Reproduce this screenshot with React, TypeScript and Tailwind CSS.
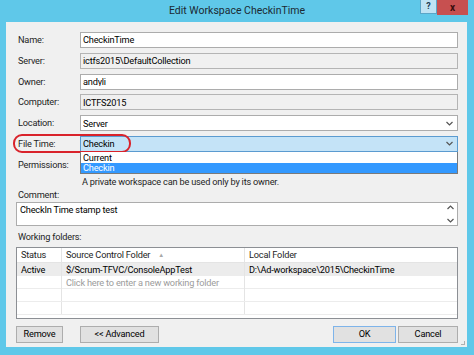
import React from "react";

function Chevron({ up = false }: { up?: boolean }) {
  return (
    <svg width="7" height="5" viewBox="0 0 7 5" className={up ? "rotate-180" : ""}>
      <path d="M0.5 1 L3.5 4 L6.5 1" fill="none" stroke="#555" strokeWidth="1.2" />
    </svg>
  );
}

function Field({
  label,
  value,
  readOnly = false,
  select = false,
  active = false,
}: {
  label: string;
  value?: string;
  readOnly?: boolean;
  select?: boolean;
  active?: boolean;
}) {
  const box = active
    ? "bg-[#c4e3f7] border-[#5b9bd0]"
    : readOnly
    ? "bg-[#f0f0f0] border-[#b4b4b4]"
    : "bg-white border-[#acacac]";
  return (
    <div className="flex items-center h-[16px]">
      <div className="w-[64px] pl-[2px] text-[#1e1e1e]">{label}</div>
      <div className={`flex-1 h-full border ${box} flex items-center pl-[2px] pr-[4px]`}>
        <span className="flex-1 truncate leading-none text-black">{value}</span>
        {select && <Chevron />}
      </div>
    </div>
  );
}

export default function App() {
  const rows = [
    { status: "Active", src: "$/Scrum-TFVC/ConsoleAppTest", local: "D:\\Ad-workspace\\2015\\CheckinTime", bg: "bg-[#ececec]" },
    { status: "", src: "Click here to enter a new working folder", local: "", bg: "bg-white", hint: true },
    { status: "", src: "", local: "", bg: "bg-white" },
    { status: "", src: "", local: "", bg: "bg-white" },
  ];

  return (
    <div className="w-[474px] h-[355px] bg-[#5fc8e9] flex flex-col font-['Roboto',sans-serif] text-[9.2px] tracking-[-0.2px] overflow-hidden">
      {/* title bar */}
      <div className="relative h-[22px] flex items-center justify-center">
        <span className="text-[10.5px] tracking-normal text-[#1b2a33]">Edit Workspace CheckinTime</span>
        <div className="absolute right-[6px] top-0 flex">
          <div className="w-[17px] h-[14px] bg-[#bfe3f4] border border-[#5aa6c8] border-t-0 flex items-center justify-center text-[9px] font-bold text-[#1d3b52] leading-none">
            ?
          </div>
          <div className="w-[31px] h-[15px] bg-[#c75050] flex items-center justify-center text-[10px] font-bold text-[#3a0d0d] leading-none">
            x
          </div>
        </div>
      </div>

      {/* client area */}
      <div className="relative flex-1 ml-[6px] mr-[7px] mb-[8px] bg-[#f0f0f0] pl-[10px] pr-[9px] pt-[10px] flex flex-col">
        <div className="flex flex-col gap-[4.8px]">
          <Field label="Name:" value="CheckinTime" />
          <Field label="Server:" value="ictfs2015\DefaultCollection" readOnly />
          <Field label="Owner:" value="andyli" />
          <Field label="Computer:" value="ICTFS2015" readOnly />
          <Field label="Location:" value="Server" select />
          <div className="relative">
            <Field label="File Time:" value="Checkin" select active />
            <div className="absolute left-[-3px] top-[-2px] w-[118px] h-[19px] rounded-[9px] border-2 border-[#d9232b]" />
          </div>
          <Field label="Permissions:" value="" select />
        </div>

        {/* dropdown list */}
        <div className="absolute left-[74px] top-[130px] w-[378px] h-[22px] bg-white border border-[#7a7a7a] border-t-0 flex flex-col leading-none">
          <div className="h-[11px] pl-[2px] flex items-center text-black">Current</div>
          <div className="h-[10px] pl-[2px] flex items-center bg-[#3399ff] text-white">Checkin</div>
        </div>

        <div className="mt-[3px] ml-[66px] h-[12px] flex items-center text-[#1e1e1e]">
          A private workspace can be used only by its owner.
        </div>
        <div className="mt-[1px] ml-[2px] h-[12px] flex items-center text-[#1e1e1e]">Comment:</div>
        <div className="mt-[1px] h-[24px] bg-white border border-[#acacac] flex">
          <div className="flex-1 pl-[3px] pt-[1px] text-black leading-[12px]">CheckIn Time stamp test</div>
          <div className="w-[11px] flex flex-col items-center justify-between py-[2px] mr-[1px]">
            <Chevron up />
            <Chevron />
          </div>
        </div>

        <div className="mt-[5px] ml-[2px] h-[12px] flex items-center text-[#1e1e1e]">Working folders:</div>
        <div className="mt-[4px] h-[72px] bg-white border border-[#8c8f94] flex flex-col">
          <div className="grid grid-cols-[44px_183px_1fr] h-[15px] border-b border-[#e4e4e4] text-[#1e1e1e]">
            <div className="pl-[4px] flex items-center">Status</div>
            <div className="pl-[4px] flex items-center border-l border-[#e4e4e4]">
              Source Control Folder
              <span className="ml-[8px] text-[6px] text-[#a8a8a8]">▲</span>
            </div>
            <div className="pl-[4px] flex items-center border-l border-[#e4e4e4]">Local Folder</div>
          </div>
          {rows.map((r, i) => (
            <div key={i} className={`grid grid-cols-[44px_183px_1fr] h-[13px] border-b border-[#ececec] ${r.bg}`}>
              <div className="pl-[4px] flex items-center text-black">{r.status}</div>
              <div className={`pl-[4px] flex items-center border-l border-[#e4e4e4] ${r.hint ? "text-[#9c9c9c]" : "text-black"}`}>{r.src}</div>
              <div className="pl-[4px] flex items-center border-l border-[#e4e4e4] text-black">{r.local}</div>
            </div>
          ))}
        </div>

        <div className="mt-[7px] flex items-center h-[17px]">
          <button className="w-[47px] h-full bg-[#e1e1e1] border border-[#adadad] text-black">Remove</button>
          <button className="ml-[17px] w-[79px] h-full bg-[#e1e1e1] border border-[#adadad] text-black">&lt;&lt; Advanced</button>
          <div className="flex-1" />
          <button className="w-[63px] h-full bg-[#e1e1e1] border border-[#7eb4ea] text-black">OK</button>
          <button className="ml-[2px] w-[60px] h-full bg-[#e1e1e1] border border-[#adadad] text-black">Cancel</button>
        </div>
        <div className="absolute right-[2px] bottom-[2px] w-[4px] h-[4px] border-r border-b border-[#b0b0b0]" />
      </div>
    </div>
  );
}
